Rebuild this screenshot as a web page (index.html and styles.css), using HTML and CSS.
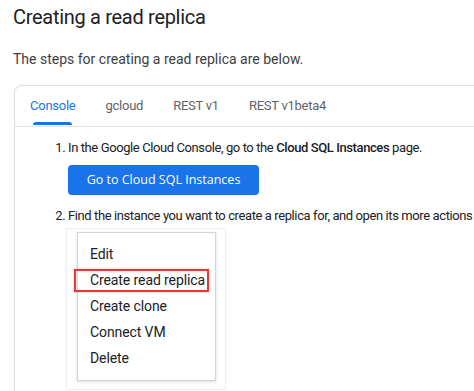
FILE: index.html
```html
<!DOCTYPE html>
<html>
<head>
    <title>Creating a read replica</title>
    <link rel="stylesheet" href="styles.css">
</head>
<body>
    <h1 class="title">Creating a read replica</h1>
    <p class="intro">The steps for creating a read replica are below.</p>

    <div class="tabs-box">
        <div class="tab-bar">
            <span class="tab active">Console</span>
            <span class="tab">gcloud</span>
            <span class="tab">REST v1</span>
            <span class="tab">REST v1beta4</span>
        </div>
        <ol class="steps">
            <li>
                In the Google Cloud Console, go to the <b>Cloud SQL Instances</b> page.
                <div class="btn-row">
                    <a class="btn-primary">Go to Cloud SQL Instances</a>
                </div>
            </li>
            <li>
                Find the instance you want to create a replica for, and open its more actions
                <div class="shot">
                    <div class="menu">
                        <div class="menu-item">Edit</div>
                        <div class="menu-item"><span class="marked">Create read replica</span></div>
                        <div class="menu-item">Create clone</div>
                        <div class="menu-item">Connect VM</div>
                        <div class="menu-item">Delete</div>
                    </div>
                </div>
            </li>
        </ol>
    </div>
</body>
</html>
```

FILE: styles.css
```css
html, body {
    overflow: hidden;
}
body {
    margin: 0;
    background-color: #fff;
    font-family: Roboto, "Liberation Sans", sans-serif;
    color: #3c4043;
}
.title {
    margin: 0;
    padding: 2px 0 0 13px;
    font-family: Roboto, "Open Sans", sans-serif;
    font-size: 20px;
    letter-spacing: -0.3px;
    font-weight: 400;
    line-height: 30px;
    color: #202124;
}
.intro {
    margin: 16px 0 0 13px;
    font-size: 14px;
    line-height: 22px;
    color: #3c4043;
}
.tabs-box {
    margin: 15px -40px 0 14px;
    border-top: 1px solid #e0e0e0;
    border-left: 1px solid #dadce0;
    border-top-left-radius: 8px;
    height: 400px;
}
.tab-bar {
    display: flex;
    border-bottom: 1px solid #e3e3e3;
    height: 40px;
}
.tab {
    position: relative;
    padding: 0 15px 0 15px;
    font-size: 13px;
    letter-spacing: -0.25px;
    line-height: 40px;
    color: #5f6368;
}
.tab.active {
    color: #1a73e8;
}
.tab.active::after {
    content: "";
    position: absolute;
    left: 18px;
    right: 18px;
    bottom: 1px;
    height: 3px;
    border-radius: 3px 3px 0 0;
    background-color: #1a73e8;
}
.steps {
    margin: 11px 0 0 0;
    padding-left: 53px;
    font-size: 13px;
    letter-spacing: -0.4px;
    line-height: 20px;
    color: #202124;
}
.steps li {
    white-space: nowrap;
}
.steps b {
    font-weight: 500;
}
.btn-row {
    padding: 7px 0 11px 0;
}
.btn-primary {
    display: inline-block;
    width: 191px;
    height: 30px;
    line-height: 30px;
    text-align: center;
    border-radius: 4px;
    background-color: #1a73e8;
    color: #fff;
    font-family: "Open Sans", Roboto, sans-serif;
    font-size: 12.5px;
    letter-spacing: 0;
    font-weight: 500;
}
.shot {
    margin: 2px 0 0 -2px;
    width: 139px;
    padding: 3px 9px 8px 10px;
    border: 1px solid #eeeeee;
}
.menu {
    padding: 8px 0 9px 12px;
    border: 1px solid #d5d5d5;
    box-shadow: 0 1px 3px rgba(0, 0, 0, 0.15);
    background-color: #fff;
}
.menu-item {
    font-size: 14px;
    letter-spacing: -0.1px;
    line-height: 26px;
    color: #202124;
}
.marked {
    position: relative;
}
.marked::after {
    content: "";
    position: absolute;
    left: -16px;
    right: -4px;
    top: -3px;
    bottom: -4px;
    border: 2px solid #e53935;
    box-shadow: 0 0 2px rgba(229, 57, 53, 0.4);
}
```
